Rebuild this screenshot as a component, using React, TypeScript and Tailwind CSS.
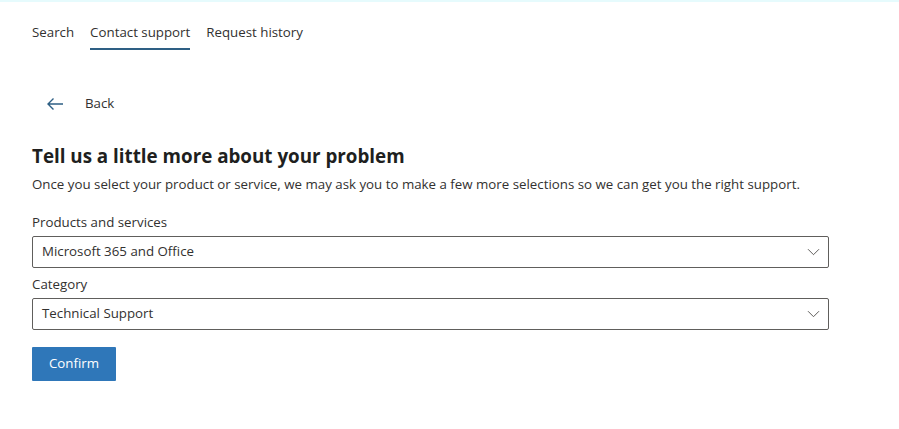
import React from 'react';

const font = { fontFamily: '"Segoe UI", "Open Sans", "Noto Sans", sans-serif' };

function Chevron() {
  return (
    <svg width="13" height="8" viewBox="0 0 13 8" fill="none" className="text-[#605e5c]">
      <path d="M1 1.2l5.5 5.5 5.5-5.5" stroke="currentColor" strokeWidth="1" />
    </svg>
  );
}

function SelectField({ label, value }: { label: string; value: string }) {
  return (
    <div className="flex flex-col">
      <span className="text-[13.3px] leading-[20px] text-[#323130] mb-[4px]">{label}</span>
      <div className="flex items-center justify-between h-[32px] w-[797px] border border-[#605e5c] rounded-[2px] pl-[9px] pr-[8px]">
        <span className="text-[13.3px] text-[#323130]">{value}</span>
        <Chevron />
      </div>
    </div>
  );
}

export default function App() {
  return (
    <div className="w-[899px] h-[429px] bg-white border-t-[2px] border-[#e6fbfd]" style={font}>
      <div className="flex gap-[16px] pl-[32px] pt-[20px] text-[13.3px] text-[#323130]">
        <span className="h-[28px] leading-[20px]">Search</span>
        <span className="h-[28px] leading-[20px] border-b-[2px] border-[#2e5f84]">Contact support</span>
        <span className="h-[28px] leading-[20px]">Request history</span>
      </div>
      <div className="flex items-center pl-[46px] mt-[42px] h-[24px]">
        <svg width="18" height="14" viewBox="0 0 18 14" fill="none">
          <path d="M17 7H2M7.5 1.5L2 7l5.5 5.5" stroke="#2e5f84" strokeWidth="1.4" />
        </svg>
        <span className="ml-[21px] text-[13.3px] text-[#323130]">Back</span>
      </div>
      <div className="pl-[32px] mt-[26px]">
        <h1 className="text-[18.8px] leading-[28px] font-bold text-[#201f1e]">Tell us a little more about your problem</h1>
        <p className="text-[13.3px] leading-[20px] text-[#323130] mt-[4px]">
          Once you select your product or service, we may ask you to make a few more selections so we can get you the right support.
        </p>
        <div className="mt-[18px] flex flex-col gap-[6px]">
          <SelectField label="Products and services" value="Microsoft 365 and Office" />
          <SelectField label="Category" value="Technical Support" />
        </div>
        <button className="mt-[17px] w-[84px] h-[34px] bg-[#2f77b9] text-white text-[13.3px] rounded-[1px]">Confirm</button>
      </div>
    </div>
  );
}
